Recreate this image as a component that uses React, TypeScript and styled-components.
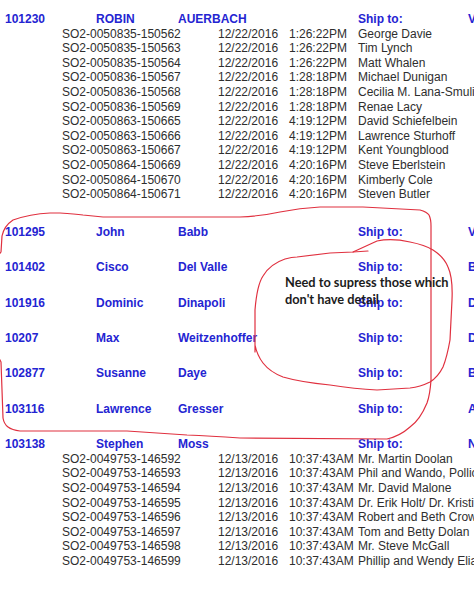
import React from "react";
import styled, { createGlobalStyle } from "styled-components";

const GlobalStyle = createGlobalStyle`
  html, body { margin: 0; padding: 0; background: #ffffff; overflow: hidden; }
  #root { width: 474px; height: 593px; }
`;

const Page = styled.div`
  position: relative;
  width: 474px;
  height: 593px;
  overflow: hidden;
  box-sizing: border-box;
  padding-top: 12px;
  background: #ffffff;
  font-family: "Liberation Sans", Arial, sans-serif;
`;

const Group = styled.section`
  padding-bottom: 20.8px;
`;

const GroupHeader = styled.div`
  display: grid;
  grid-template-columns: 91px 82px 180px 110px max-content;
  padding-left: 5px;
  height: 14.6px;
  line-height: 14.6px;
  font-size: 12px;
  font-weight: 700;
  color: #2424d2;
  white-space: nowrap;
`;

const Details = styled.div`
  margin-bottom: 2.4px;
`;

const DetailRow = styled.div`
  display: grid;
  grid-template-columns: 156px 71px 69px max-content;
  padding-left: 62px;
  height: 14.6px;
  line-height: 14.6px;
  font-size: 12px;
  color: #2e2e2e;
  white-space: nowrap;
`;

const Cell = styled.span`
  overflow: visible;
`;

const Overlay = styled.svg`
  position: absolute;
  left: 0;
  top: 0;
  width: 474px;
  height: 593px;
  pointer-events: none;
`;

const Note = styled.div`
  position: absolute;
  left: 285px;
  top: 274px;
  font-family: Lato, "Open Sans", sans-serif;
  font-size: 12.8px;
  font-weight: 700;
  line-height: 17px;
  color: #1c1c1c;
  white-space: nowrap;
`;

type Detail = { so: string; date: string; time: string; name: string };
type GroupData = {
  id: string;
  first: string;
  last: string;
  city: string;
  details: Detail[];
};

const d = (so: string, date: string, time: string, name: string): Detail => ({
  so,
  date,
  time,
  name,
});

const groups: GroupData[] = [
  {
    id: "101230",
    first: "ROBIN",
    last: "AUERBACH",
    city: "Virginia Beach",
    details: [
      d("SO2-0050835-150562", "12/22/2016", "1:26:22PM", "George Davie"),
      d("SO2-0050835-150563", "12/22/2016", "1:26:22PM", "Tim Lynch"),
      d("SO2-0050835-150564", "12/22/2016", "1:26:22PM", "Matt Whalen"),
      d("SO2-0050836-150567", "12/22/2016", "1:28:18PM", "Michael Dunigan"),
      d("SO2-0050836-150568", "12/22/2016", "1:28:18PM", "Cecilia M. Lana-Smulian"),
      d("SO2-0050836-150569", "12/22/2016", "1:28:18PM", "Renae Lacy"),
      d("SO2-0050863-150665", "12/22/2016", "4:19:12PM", "David Schiefelbein"),
      d("SO2-0050863-150666", "12/22/2016", "4:19:12PM", "Lawrence Sturhoff"),
      d("SO2-0050863-150667", "12/22/2016", "4:19:12PM", "Kent Youngblood"),
      d("SO2-0050864-150669", "12/22/2016", "4:20:16PM", "Steve Eberlstein"),
      d("SO2-0050864-150670", "12/22/2016", "4:20:16PM", "Kimberly Cole"),
      d("SO2-0050864-150671", "12/22/2016", "4:20:16PM", "Steven Butler"),
    ],
  },
  { id: "101295", first: "John", last: "Babb", city: "Virginia Beach", details: [] },
  { id: "101402", first: "Cisco", last: "Del Valle", city: "Boston", details: [] },
  { id: "101916", first: "Dominic", last: "Dinapoli", city: "Dallas", details: [] },
  { id: "10207", first: "Max", last: "Weitzenhoffer", city: "Denver", details: [] },
  { id: "102877", first: "Susanne", last: "Daye", city: "Boston", details: [] },
  { id: "103116", first: "Lawrence", last: "Gresser", city: "Atlanta", details: [] },
  {
    id: "103138",
    first: "Stephen",
    last: "Moss",
    city: "New York",
    details: [
      d("SO2-0049753-146592", "12/13/2016", "10:37:43AM", "Mr. Martin Doolan"),
      d("SO2-0049753-146593", "12/13/2016", "10:37:43AM", "Phil and Wando, Pollick"),
      d("SO2-0049753-146594", "12/13/2016", "10:37:43AM", "Mr. David Malone"),
      d("SO2-0049753-146595", "12/13/2016", "10:37:43AM", "Dr. Erik Holt/ Dr. Kristin"),
      d("SO2-0049753-146596", "12/13/2016", "10:37:43AM", "Robert and Beth Crowley"),
      d("SO2-0049753-146597", "12/13/2016", "10:37:43AM", "Tom and Betty Dolan"),
      d("SO2-0049753-146598", "12/13/2016", "10:37:43AM", "Mr. Steve McGall"),
      d("SO2-0049753-146599", "12/13/2016", "10:37:43AM", "Phillip and Wendy Elias"),
    ],
  },
];

const RED = "#e0303f";

function Annotations() {
  return (
    <Overlay viewBox="0 0 474 593">
      <g fill="none" stroke={RED} strokeWidth={1.2} strokeLinecap="round" strokeLinejoin="round">
        <path d="M -2 256 L 1 252 L 2 236 Q 4 226 13 220 Q 30 214 50 213 L 60 213 Q 75 214 83 215 L 103 217 L 240 217 Q 262 216 280 212 Q 300 208 320 207 L 363 207 L 420 210 Q 427 212 429 215 Q 431 219 431 226 L 431 380 Q 430 395 427 403 Q 420 420 410 427 Q 400 436 387 439 L 240 438 Q 210 436 187 435 L 127 431 L 20 431 Q 12 430 8 427 Q 4 424 3 418 L 1 362 L -2 356" />
        <path d="M 255 352 L 255 310 Q 257 285 263 276 Q 270 264 285 259 Q 292 257 297 257 L 330 253 L 353 252 Q 366 246 377 241 Q 392 238 410 242 Q 425 245 433 250 Q 444 257 448 267 Q 453 278 452 300 L 450 340 Q 447 357 443 367 Q 438 377 430 382 Q 420 387 410 388 L 377 390 Q 355 389 330 385 Q 300 382 283 377 Q 270 372 263 363 Q 257 355 255 345" />
        <path d="M 353 252 L 368 251" />
      </g>
    </Overlay>
  );
}

export default function App() {
  return (
    <>
      <GlobalStyle />
      <Page>
        {groups.map((g) => (
          <Group key={g.id}>
            <GroupHeader>
              <Cell>{g.id}</Cell>
              <Cell>{g.first}</Cell>
              <Cell>{g.last}</Cell>
              <Cell>Ship to:</Cell>
              <Cell>{g.city}</Cell>
            </GroupHeader>
            {g.details.length > 0 && (
              <Details>
                {g.details.map((row) => (
                  <DetailRow key={row.so}>
                    <Cell>{row.so}</Cell>
                    <Cell>{row.date}</Cell>
                    <Cell>{row.time}</Cell>
                    <Cell>{row.name}</Cell>
                  </DetailRow>
                ))}
              </Details>
            )}
          </Group>
        ))}
        <Annotations />
        <Note>
          Need to supress those which
          <br />
          don't have detail
        </Note>
      </Page>
    </>
  );
}
